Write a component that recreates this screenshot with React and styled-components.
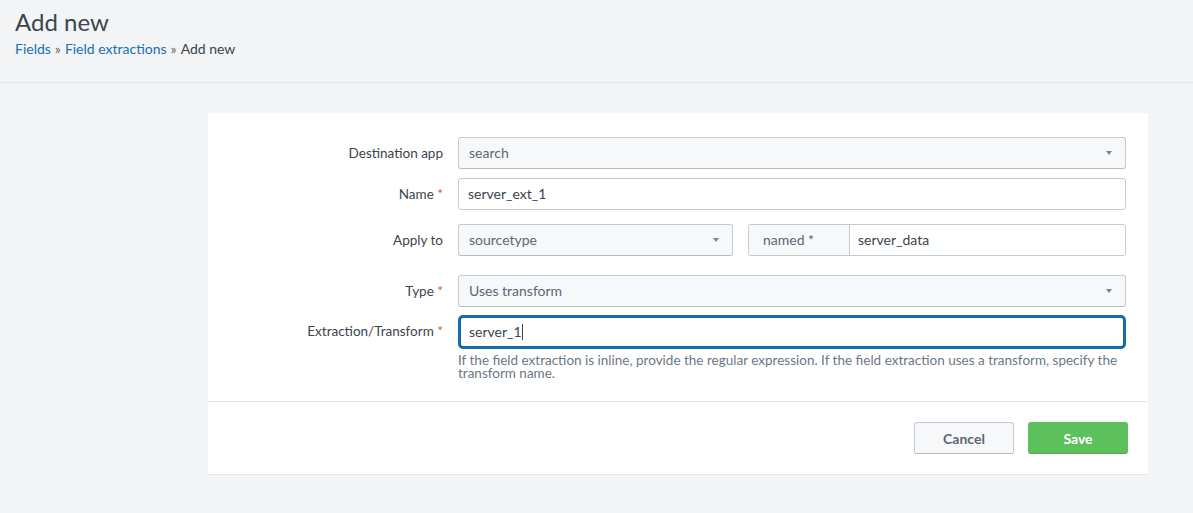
import React from 'react';
import styled, { createGlobalStyle } from 'styled-components';

const GlobalStyle = createGlobalStyle`
  html, body {
    margin: 0;
    padding: 0;
    background: #f2f4f5;
    font-family: Lato, "Liberation Sans", Arial, sans-serif;
    color: #3c444d;
  }
  * { box-sizing: border-box; }
`;

const Page = styled.div`
  min-height: 513px;
  background: #f2f4f5;
`;

const Header = styled.header`
  height: 83px;
  padding: 7px 15px 0;
  border-bottom: 1px solid #e1e4e8;
`;

const Title = styled.h1`
  margin: 0;
  font-size: 24px;
  line-height: 29px;
  font-weight: 400;
  color: #3c444d;
`;

const Crumbs = styled.div`
  margin-top: 4px;
  font-size: 14px;
  line-height: 17px;
  color: #3c444d;
  a {
    color: #1a6fb0;
    text-decoration: none;
  }
  span.sep {
    color: #5c6773;
    margin: 0 4px;
  }
`;

const Content = styled.main`
  padding: 30px 45px 40px 208px;
`;

const Panel = styled.section`
  width: 940px;
  background: #fff;
  border-bottom: 1px solid #e1e4e8;
`;

const Body = styled.div`
  padding: 24px 22px 21px 0;
`;

const Row = styled.div`
  display: grid;
  grid-template-columns: 235px 1fr;
  column-gap: 15px;
  align-items: start;
  margin-bottom: ${p => p.$mb ?? 9}px;
`;

const Label = styled.label`
  height: 32px;
  text-align: right;
  font-size: 13.5px;
  line-height: 32px;
  color: #3c444d;
  ${p => p.$required && `
    &::after {
      content: ' *';
      color: #d6563c;
    }
  `}
`;

const Select = styled.div`
  position: relative;
  height: 32px;
  padding: 0 30px 0 10px;
  background: #f7f8fa;
  border: 1px solid #c3cbd4;
  border-bottom-color: #b4bcc6;
  border-radius: 3px;
  font-size: 14px;
  line-height: 30px;
  color: #5c6773;
  &::after {
    content: '';
    position: absolute;
    right: 13px;
    top: 13px;
    border-left: 3.5px solid transparent;
    border-right: 3.5px solid transparent;
    border-top: 4px solid #7b8592;
  }
`;

const TextBox = styled.div`
  height: ${p => (p.$focused ? 34 : 32)}px;
  padding: 0 ${p => (p.$focused ? 8 : 9)}px;
  background: #fff;
  border: ${p => (p.$focused ? '3px solid #1a6aa3' : '1px solid #c3cbd4')};
  border-radius: ${p => (p.$focused ? 5 : 3)}px;
  font-size: 14px;
  line-height: ${p => (p.$focused ? 28 : 30)}px;
  color: #3c444d;
`;

const Caret = styled.span`
  display: inline-block;
  width: 1px;
  height: 16px;
  background: #3c444d;
  vertical-align: -3px;
`;

const ApplyGroup = styled.div`
  display: grid;
  grid-template-columns: 275px 1fr;
  column-gap: 15px;
`;

const AddonGroup = styled.div`
  display: flex;
  height: 32px;
  border: 1px solid #c3cbd4;
  border-radius: 3px;
  overflow: hidden;
`;

const Addon = styled.div`
  width: 101px;
  padding-left: 14px;
  background: #f7f8fa;
  border-right: 1px solid #c3cbd4;
  font-size: 14px;
  line-height: 30px;
  color: #5c6773;
  &::after {
    content: ' *';
    color: #5c6773;
  }
`;

const AddonInput = styled.div`
  flex: 1;
  padding: 0 8px;
  font-size: 14px;
  line-height: 30px;
  color: #3c444d;
`;

const Help = styled.p`
  margin: 5px 0 0;
  max-width: 668px;
  font-size: 13.5px;
  line-height: 13px;
  color: #6b7785;
`;

const Footer = styled.div`
  display: flex;
  justify-content: flex-end;
  gap: 14px;
  padding: 20px 20px;
  border-top: 1px solid #e1e4e8;
`;

const Button = styled.button`
  width: 100px;
  height: 32px;
  border-radius: 3px;
  font-family: inherit;
  font-size: 14px;
  font-weight: 700;
  cursor: pointer;
  background: ${p => (p.$primary ? '#5cc05c' : '#f7f8fa')};
  color: ${p => (p.$primary ? '#fff' : '#5c6773')};
  border: 1px solid ${p => (p.$primary ? '#5cc05c' : '#c3cbd4')};
  border-bottom-color: ${p => (p.$primary ? '#4eaa4e' : '#b4bcc6')};
`;

export default function App() {
  return (
    <Page>
      <GlobalStyle />
      <Header>
        <Title>Add new</Title>
        <Crumbs>
          <a href="#fields">Fields</a>
          <span className="sep">»</span>
          <a href="#extractions">Field extractions</a>
          <span className="sep">»</span>
          Add new
        </Crumbs>
      </Header>
      <Content>
        <Panel>
          <Body>
            <Row $mb={9}>
              <Label>Destination app</Label>
              <Select>search</Select>
            </Row>
            <Row $mb={14}>
              <Label $required>Name</Label>
              <TextBox>server_ext_1</TextBox>
            </Row>
            <Row $mb={19}>
              <Label>Apply to</Label>
              <ApplyGroup>
                <Select>sourcetype</Select>
                <AddonGroup>
                  <Addon>named</Addon>
                  <AddonInput>server_data</AddonInput>
                </AddonGroup>
              </ApplyGroup>
            </Row>
            <Row $mb={8}>
              <Label $required>Type</Label>
              <Select>Uses transform</Select>
            </Row>
            <Row $mb={0}>
              <Label $required>Extraction/Transform</Label>
              <div>
                <TextBox $focused>
                  server_1<Caret />
                </TextBox>
                <Help>
                  If the field extraction is inline, provide the regular expression. If the field
                  extraction uses a transform, specify the transform name.
                </Help>
              </div>
            </Row>
          </Body>
          <Footer>
            <Button>Cancel</Button>
            <Button $primary>Save</Button>
          </Footer>
        </Panel>
      </Content>
    </Page>
  );
}
